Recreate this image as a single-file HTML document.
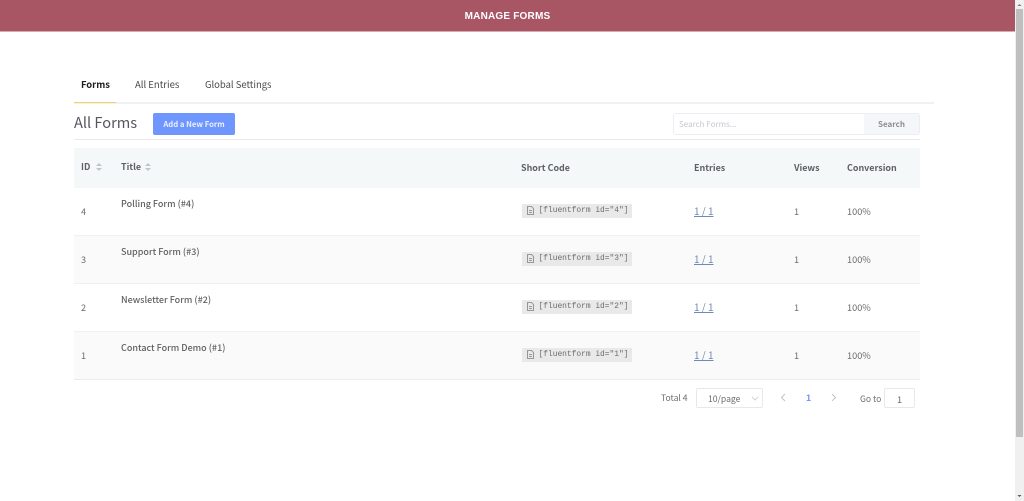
<!DOCTYPE html>
<html>
<head>
<meta charset="utf-8">
<style>
html,body{margin:0;padding:0;width:1024px;height:501px;overflow:hidden;background:#fff}
body{font-family:"Noto Sans CJK SC","Liberation Sans",sans-serif;position:relative;color:#606266}
#w{position:absolute;left:0;top:0;width:1024px;height:501px;filter:blur(.3px)}
.a{position:absolute;white-space:nowrap}
.t{position:absolute;white-space:nowrap;line-height:16px;height:16px}
.code{position:absolute;left:522px;width:110px;height:14px;background:#e9e9e9}
.code span{position:absolute;left:16.5px;top:0;line-height:14px;font-family:"Liberation Mono",monospace;font-size:7.9px;color:#6e6e6e;white-space:nowrap}
.code svg{position:absolute;left:4px;top:2px}
.sort{position:absolute;width:6px;height:8px}
.lnk{position:absolute;left:694px;font-size:10px;line-height:14px;color:#7487ba;text-decoration:underline}
.h{font-size:8.95px;font-weight:700;color:#5f6166}
.c{font-size:9.2px;color:#6c6e73}
.n{font-size:9px;font-weight:500;color:#606266}
</style>
</head>
<body>
<div id="w">
<div class="a" style="left:0;top:0;width:1015px;height:32px;background:#a95664;border-bottom:1px solid #d9a9b1;box-sizing:border-box"></div>
<div class="t" style="left:400px;width:215px;top:9px;text-align:center;font-family:'Liberation Sans',sans-serif;font-weight:700;font-size:10px;letter-spacing:.2px;color:#fff">MANAGE FORMS</div>

<div class="a" style="left:1015px;top:0;width:9px;height:501px;background:#f0f0f0"></div>
<div class="a" style="left:1016px;top:9px;width:7px;height:428px;background:#bfbfbf"></div>
<svg class="a" style="left:1015px;top:2px" width="9" height="5"><path d="M2.5 4L4.5 2L6.5 4Z" fill="#7a7a7a"/></svg>
<svg class="a" style="left:1015px;top:494px" width="9" height="5"><path d="M2.5 1L4.5 3L6.5 1Z" fill="#555"/></svg>

<div class="a" style="left:74px;top:102px;width:860px;height:2px;background:#f1f1f1"></div>
<div class="a" style="left:74px;top:102px;width:42px;height:1px;background:#f0d45e"></div>
<div class="t" style="left:81px;top:76px;font-size:9.4px;font-weight:700;color:#1f1f1f">Forms</div>
<div class="t" style="left:135px;top:76px;font-size:9.5px;color:#4a4a4a">All Entries</div>
<div class="t" style="left:205px;top:76px;font-size:9.45px;color:#4a4a4a">Global Settings</div>

<div class="t" style="left:74px;top:115px;font-size:14.6px;color:#55565f">All Forms</div>
<div class="a" style="left:153px;top:113px;width:82px;height:22px;background:#6f96ff;border-radius:2px"></div>
<div class="t" style="left:153px;width:82px;top:117px;text-align:center;font-size:7.7px;font-weight:700;color:#e9efff">Add a New Form</div>

<div class="a" style="left:673px;top:113px;width:247px;height:22px;border:1px solid #eceef3;border-radius:3px;box-sizing:border-box;background:#fff"></div>
<div class="a" style="left:864px;top:114px;width:55px;height:20px;background:#f5f6f9"></div>
<div class="t" style="left:679px;top:117px;font-size:8px;color:#c6c8ce">Search Forms...</div>
<div class="t" style="left:864px;width:55px;top:117px;text-align:center;font-size:8px;font-weight:700;color:#8b8d93">Search</div>

<div class="a" style="left:74px;top:139px;width:846px;height:1px;background:#e9e9e9"></div>

<div class="a" style="left:74px;top:148px;width:846px;height:40px;background:#f5f8f9"></div>
<div class="a" style="left:74px;top:188px;width:846px;height:48px;background:#fff;border-bottom:1px solid #f0f0f0;box-sizing:border-box"></div>
<div class="a" style="left:74px;top:236px;width:846px;height:48px;background:#fafafa;border-bottom:1px solid #f0f0f0;box-sizing:border-box"></div>
<div class="a" style="left:74px;top:284px;width:846px;height:48px;background:#fff;border-bottom:1px solid #f0f0f0;box-sizing:border-box"></div>
<div class="a" style="left:74px;top:332px;width:846px;height:48px;background:#fafafa;border-bottom:1px solid #ececec;box-sizing:border-box"></div>

<div class="t h" style="left:81px;top:159px">ID</div>
<svg class="sort" style="left:96px;top:163px"><path d="M3 0L6 3H0Z" fill="#c2c5ca"/><path d="M3 8L6 5H0Z" fill="#c2c5ca"/></svg>
<div class="t h" style="left:121px;top:159px">Title</div>
<svg class="sort" style="left:145px;top:163px"><path d="M3 0L6 3H0Z" fill="#c2c5ca"/><path d="M3 8L6 5H0Z" fill="#c2c5ca"/></svg>
<div class="t h" style="left:521px;top:160px">Short Code</div>
<div class="t h" style="left:694px;top:160px">Entries</div>
<div class="t h" style="left:794px;top:160px">Views</div>
<div class="t h" style="left:847px;top:160px">Conversion</div>

<div class="t c" style="left:81px;top:203px">4</div>
<div class="t n" style="left:121px;top:196px">Polling Form (#4)</div>
<div class="code" style="top:204px"><svg width="9" height="10"><path d="M1.5 .5H5.5L7.5 2.5V8.5H1.5ZM3 4.5H6M3 6.5H6" fill="none" stroke="#808080" stroke-width=".8"/></svg><span>[fluentform id="4"]</span></div>
<div class="lnk" style="top:204px">1 / 1</div>
<div class="t c" style="left:794px;top:203px">1</div>
<div class="t c" style="left:847px;top:203px">100%</div>

<div class="t c" style="left:81px;top:251px">3</div>
<div class="t n" style="left:121px;top:244px">Support Form (#3)</div>
<div class="code" style="top:252px"><svg width="9" height="10"><path d="M1.5 .5H5.5L7.5 2.5V8.5H1.5ZM3 4.5H6M3 6.5H6" fill="none" stroke="#808080" stroke-width=".8"/></svg><span>[fluentform id="3"]</span></div>
<div class="lnk" style="top:252px">1 / 1</div>
<div class="t c" style="left:794px;top:251px">1</div>
<div class="t c" style="left:847px;top:251px">100%</div>

<div class="t c" style="left:81px;top:299px">2</div>
<div class="t n" style="left:121px;top:292px">Newsletter Form (#2)</div>
<div class="code" style="top:300px"><svg width="9" height="10"><path d="M1.5 .5H5.5L7.5 2.5V8.5H1.5ZM3 4.5H6M3 6.5H6" fill="none" stroke="#808080" stroke-width=".8"/></svg><span>[fluentform id="2"]</span></div>
<div class="lnk" style="top:300px">1 / 1</div>
<div class="t c" style="left:794px;top:299px">1</div>
<div class="t c" style="left:847px;top:299px">100%</div>

<div class="t c" style="left:81px;top:347px">1</div>
<div class="t n" style="left:121px;top:340px">Contact Form Demo (#1)</div>
<div class="code" style="top:348px"><svg width="9" height="10"><path d="M1.5 .5H5.5L7.5 2.5V8.5H1.5ZM3 4.5H6M3 6.5H6" fill="none" stroke="#808080" stroke-width=".8"/></svg><span>[fluentform id="1"]</span></div>
<div class="lnk" style="top:348px">1 / 1</div>
<div class="t c" style="left:794px;top:347px">1</div>
<div class="t c" style="left:847px;top:347px">100%</div>

<div class="t" style="left:661px;top:390px;font-size:8.6px;color:#6a6c72">Total 4</div>
<div class="a" style="left:696px;top:388px;width:67px;height:20px;border:1px solid #e6e8ec;border-radius:2px;box-sizing:border-box"></div>
<div class="t" style="left:708px;top:391px;font-size:8.6px;color:#6a6c72">10/page</div>
<svg class="a" style="left:751px;top:396px" width="8" height="5"><path d="M1 1L4 4L7 1" fill="none" stroke="#c7c9ce" stroke-width=".8"/></svg>
<svg class="a" style="left:780px;top:393px" width="6" height="9"><path d="M5 1L1.5 4.5L5 8" fill="none" stroke="#c0c4cc" stroke-width="1"/></svg>
<div class="t" style="left:806px;top:390px;font-size:8.8px;font-weight:700;color:#6f96ff">1</div>
<svg class="a" style="left:831px;top:393px" width="6" height="9"><path d="M1 1L4.5 4.5L1 8" fill="none" stroke="#c0c4cc" stroke-width="1"/></svg>
<div class="t" style="left:860px;top:391px;font-size:8.6px;color:#6a6c72">Go to</div>
<div class="a" style="left:884px;top:388px;width:31px;height:20px;border:1px solid #e6e8ec;border-radius:2px;box-sizing:border-box"></div>
<div class="t" style="left:884px;width:31px;top:391px;text-align:center;font-size:9.2px;color:#6a6c72">1</div>
</div>
</body>
</html>
